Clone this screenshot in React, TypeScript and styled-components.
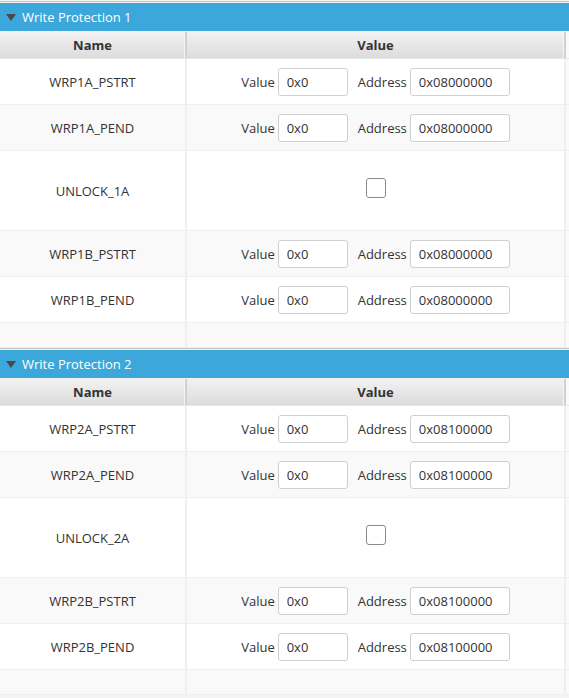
import React from "react";
import styled, { createGlobalStyle } from "styled-components";

const Global = createGlobalStyle`
  html, body { margin: 0; padding: 0; background: #f4f4f4; }
  body { font-family: "Open Sans", "Noto Sans", sans-serif; font-size: 13px; color: #333; }
`;

const Page = styled.div`
  width: 569px;
  display: flex;
  flex-direction: column;
  padding-top: 1px;
  background: #f4f4f4;
`;

const Section = styled.section`
  display: flex;
  flex-direction: column;
  padding-top: 1px;
  border-top: 1px solid #c4c4c4;
  background: #f4f4f4;
`;

const TitleBar = styled.div`
  height: 28px;
  background: #3ba7db;
  color: #ffffff;
  display: flex;
  align-items: center;
  gap: 6px;
  padding-left: 6px;
  font-size: 13px;
`;

const Arrow = styled.span`
  width: 0;
  height: 0;
  border-left: 5px solid transparent;
  border-right: 5px solid transparent;
  border-top: 7px solid #4a4a4a;
  margin-top: 1px;
`;

const Row = styled.div<{ $h: number; $alt?: boolean }>`
  display: grid;
  grid-template-columns: 187px 379px 1fr;
  height: ${(p) => p.$h}px;
  background: ${(p) => (p.$alt ? "#f9f9f9" : "#ffffff")};
  border-bottom: 1px solid #efefef;
  box-sizing: border-box;
`;

const HeadRow = styled.div`
  display: grid;
  grid-template-columns: 187px 379px 1fr;
  height: 28px;
  padding-top: 1px;
  background: linear-gradient(#f3f3f3, #dcdcdc);
  border-bottom: 1px solid #e6e6e6;
  box-sizing: border-box;
`;

const HeadCell = styled.div`
  display: flex;
  align-items: center;
  justify-content: center;
  font-weight: 700;
  color: #333;
  border-right: 2px solid #d0d0d0;
  box-shadow: inset -1px 0 0 #f6f6f6;
`;

const Cell = styled.div`
  display: flex;
  align-items: center;
  justify-content: center;
  border-right: 2px solid #efefef;
  color: #333;
  gap: 3px;
`;

const Filler = styled.div`
  background: #fafafa;
`;

const Label = styled.span`
  color: #333;
`;

const Field = styled.div<{ $w: number }>`
  width: ${(p) => p.$w}px;
  height: 28px;
  box-sizing: border-box;
  border: 1px solid #cfcfcf;
  border-radius: 3px;
  background: #fff;
  display: flex;
  align-items: center;
  padding-left: 8px;
  color: #333;
`;

const Group = styled.div`
  display: flex;
  align-items: center;
  gap: 3px;
`;

const Pair = styled.div`
  display: flex;
  align-items: center;
  gap: 10px;
`;

const Check = styled.div`
  width: 20px;
  height: 20px;
  box-sizing: border-box;
  border: 1px solid #8a8a8a;
  border-radius: 3px;
  background: #fff;
  margin-top: -6px;
`;

type Entry = { name: string; kind: "reg" | "check" };

const Block: React.FC<{ n: number; addr: string }> = ({ n, addr }) => {
  const rows: Entry[] = [
    { name: `WRP${n}A_PSTRT`, kind: "reg" },
    { name: `WRP${n}A_PEND`, kind: "reg" },
    { name: `UNLOCK_${n}A`, kind: "check" },
    { name: `WRP${n}B_PSTRT`, kind: "reg" },
    { name: `WRP${n}B_PEND`, kind: "reg" },
  ];
  return (
    <Section>
      <TitleBar>
        <Arrow />
        <span>Write Protection {n}</span>
      </TitleBar>
      <HeadRow>
        <HeadCell>Name</HeadCell>
        <HeadCell>Value</HeadCell>
        <Filler />
      </HeadRow>
      {rows.map((r, i) => (
        <Row key={r.name} $h={r.kind === "check" ? 80 : 46} $alt={i % 2 === 1}>
          <Cell>{r.name}</Cell>
          <Cell>
            {r.kind === "reg" ? (
              <Pair>
                <Group>
                  <Label>Value</Label>
                  <Field $w={70}>0x0</Field>
                </Group>
                <Group>
                  <Label>Address</Label>
                  <Field $w={100}>{addr}</Field>
                </Group>
              </Pair>
            ) : (
              <Check />
            )}
          </Cell>
          <Filler />
        </Row>
      ))}
      <Row $h={25} $alt>
        <Cell />
        <Cell />
        <Filler />
      </Row>
    </Section>
  );
};

export default function App() {
  return (
    <Page>
      <Global />
      <Block n={1} addr="0x08000000" />
      <Block n={2} addr="0x08100000" />
    </Page>
  );
}
